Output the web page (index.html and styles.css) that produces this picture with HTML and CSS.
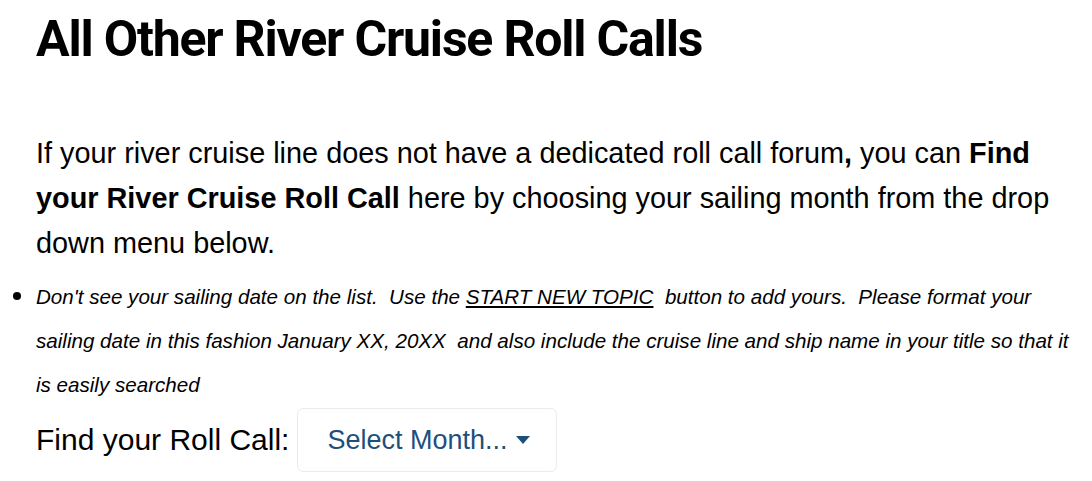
FILE: index.html
```html
<!DOCTYPE html>
<html lang="en">
<head>
  <meta charset="UTF-8">
  <title>All Other River Cruise Roll Calls</title>
  <link rel="stylesheet" href="styles.css">
</head>
<body>
  <main class="contenido">
    <h1 class="titulo">All Other River Cruise Roll Calls</h1>

    <p class="intro">If your river cruise line does not have a dedicated roll call forum<b>,</b> you can <b>Find your River Cruise Roll Call</b> here by choosing your sailing month from the drop down menu below.</p>

    <ul class="notas">
      <li><i>Don't see your sailing date on the list.&nbsp; Use the <u>START NEW TOPIC</u>&nbsp; button to add yours.&nbsp; Please format your sailing date in this fashion January XX, 20XX&nbsp; and also include the cruise line and ship name in your title so that it is easily searched</i></li>
    </ul>

    <div class="buscar">
      <span>Find your Roll Call:</span>
      <button class="selector">Select Month... <span class="flecha"></span></button>
    </div>
  </main>
</body>
</html>
```

FILE: styles.css
```css
body {
  margin: 0;
  padding: 0;
  background: #fff;
  color: #000;
  font-family: "Liberation Sans", Arial, sans-serif;
}
.contenido {
  padding: 0 18px 0 36px;
}
.titulo {
  font-family: Roboto, sans-serif;
  font-weight: 700;
  font-size: 50px;
  line-height: 60px;
  margin: 9px 0 0;
  letter-spacing: -1.2px;
}
.intro {
  font-size: 28.85px;
  line-height: 45px;
  margin: 62px 0 0;
}
.notas {
  margin: 7px 0 0;
  padding: 0;
  font-size: 20.6px;
  line-height: 44px;
}
.notas li {
  margin: 0;
}
.notas li::marker {
  font-size: 26px;
}
.buscar {
  display: flex;
  align-items: center;
  gap: 8px;
  margin-top: 1px;
  font-size: 30px;
}
.selector {
  display: flex;
  align-items: center;
  gap: 8px;
  font-family: "Liberation Sans", Arial, sans-serif;
  font-size: 27px;
  color: #1c4f7c;
  background: #fff;
  border: 1px solid #ebebeb;
  border-radius: 6px;
  padding: 0 26px 0 29px;
  height: 64px;
}
.flecha {
  width: 0;
  height: 0;
  border-left: 7.5px solid transparent;
  border-right: 7.5px solid transparent;
  border-top: 8px solid #1c4f7c;
}
```
